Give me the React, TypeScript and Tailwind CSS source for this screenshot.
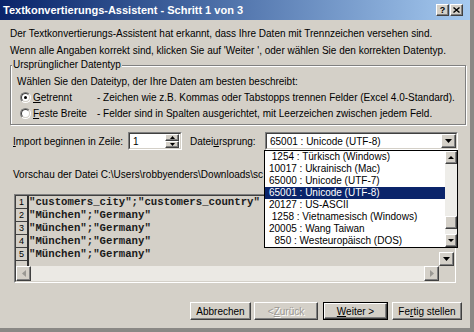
import React from 'react';

const raised =
  'border border-t-white border-l-white border-r-[#404040] border-b-[#404040] shadow-[inset_-1px_-1px_0_#808080] bg-[#d4d0c8]';

function Sunken({ className = '', inner = '', children }: { className?: string; inner?: string; children?: React.ReactNode }) {
  return (
    <div className={`border border-t-[#808080] border-l-[#808080] border-r-white border-b-white ${className}`}>
      <div className={`h-full w-full border border-t-[#404040] border-l-[#404040] border-r-[#d4d0c8] border-b-[#d4d0c8] ${inner}`}>
        {children}
      </div>
    </div>
  );
}

function Arrow({ dir, color = '#000', size = 7 }: { dir: 'up' | 'down' | 'left' | 'right'; color?: string; size?: number }) {
  const h = Math.ceil(size / 2);
  const pts =
    dir === 'down'
      ? `0,0 ${size},0 ${size / 2},${h}`
      : dir === 'up'
      ? `0,${h} ${size},${h} ${size / 2},0`
      : dir === 'left'
      ? `${h},0 ${h},${size} 0,${size / 2}`
      : `0,0 0,${size} ${h},${size / 2}`;
  const w = dir === 'up' || dir === 'down' ? size : h;
  const hh = dir === 'up' || dir === 'down' ? h : size;
  return (
    <svg width={w} height={hh} viewBox={`0 0 ${w} ${hh}`}>
      <polygon points={pts} fill={color} />
    </svg>
  );
}

const codepages = [
  ' 1254 : Türkisch (Windows)',
  '10017 : Ukrainisch (Mac)',
  '65000 : Unicode (UTF-7)',
  '65001 : Unicode (UTF-8)',
  '20127 : US-ASCII',
  ' 1258 : Vietnamesisch (Windows)',
  '20005 : Wang Taiwan',
  '  850 : Westeuropäisch (DOS)',
];

const previewRows = [
  '"customers_city";"customers_country"',
  '"München";"Germany"',
  '"München";"Germany"',
  '"München";"Germany"',
  '"München";"Germany"',
];

function Radio({ checked }: { checked?: boolean }) {
  return (
    <div className="w-[11px] h-[11px] rounded-full border border-t-[#808080] border-l-[#808080] border-r-white border-b-white">
      <div className="w-full h-full rounded-full border border-t-[#404040] border-l-[#404040] border-r-[#d4d0c8] border-b-[#d4d0c8] bg-white flex items-center justify-center">
        {checked && <div className="w-[3px] h-[3px] rounded-full bg-black" />}
      </div>
    </div>
  );
}

function Button({ w, children, isDefault, disabled }: { w: string; children: React.ReactNode; isDefault?: boolean; disabled?: boolean }) {
  const body = (
    <div
      className={`${raised} h-full w-full flex items-center justify-center text-[10px] ${
        disabled ? 'text-[#9a9893] [text-shadow:1px_1px_0_#fff]' : 'text-black'
      }`}
    >
      {children}
    </div>
  );
  if (isDefault) {
    return <div className={`${w} h-[18px] border border-black`}>{body}</div>;
  }
  return <div className={`${w} h-[18px]`}>{body}</div>;
}

export default function App() {
  return (
    <div className="w-[474px] h-[332px] overflow-hidden relative bg-[#d4d0c8] border-r-4 border-b-4 border-[#8a8885] font-['Liberation_Sans',Arial,sans-serif] text-black">
      {/* title bar */}
      <div className="h-[20px] flex items-center bg-linear-to-r from-[#0a246a] to-[#a6caf0]">
        <span className="pl-[3px] text-[11px] font-bold text-white whitespace-nowrap">
          Textkonvertierungs-Assistent - Schritt 1 von 3
        </span>
        <div className="ml-auto mr-[7px] flex gap-[1px]">
          <div className={`${raised} w-[13px] h-[12px] flex items-center justify-center text-[9px] font-bold leading-none`}>?</div>
          <div className={`${raised} w-[13px] h-[12px] flex items-center justify-center`}>
            <svg width="7" height="6" viewBox="0 0 7 6">
              <path d="M0.5 0.5 L6.5 5.5 M6.5 0.5 L0.5 5.5" stroke="#000" strokeWidth="1.4" />
            </svg>
          </div>
        </div>
      </div>

      <div className="pl-[10px] pr-[4px]">
        <div className="mt-[5px] text-[10px] leading-[17px] whitespace-nowrap">
          <div>Der Textkonvertierungs-Assistent hat erkannt, dass Ihre Daten mit Trennzeichen versehen sind.</div>
          <div>Wenn alle Angaben korrekt sind, klicken Sie auf 'Weiter ', oder wählen Sie den korrekten Datentyp.</div>
        </div>

        <fieldset className="border border-[#808080] shadow-[1px_1px_0_#fff,inset_1px_1px_0_#fff]">
          <legend className="ml-[1px] px-[1px] text-[10px] leading-[12px] bg-[#d4d0c8]">Ursprünglicher Datentyp</legend>
          <div className="pl-[6px] pb-[3px] text-[10px] whitespace-nowrap">
            <div className="mt-[4px] leading-[14px]">Wählen Sie den Dateityp, der Ihre Daten am besten beschreibt:</div>
            <div className="h-[16px] flex items-center">
              <div className="ml-[3px]">
                <Radio checked />
              </div>
              <span className="ml-[2px] w-[64px]">
                <u>G</u>etrennt
              </span>
              <span>- Zeichen wie z.B. Kommas oder Tabstopps trennen Felder (Excel 4.0-Standard).</span>
            </div>
            <div className="h-[16px] flex items-center">
              <div className="ml-[3px]">
                <Radio />
              </div>
              <span className="ml-[2px] w-[64px]">
                <u>F</u>este Breite
              </span>
              <span>- Felder sind in Spalten ausgerichtet, mit Leerzeichen zwischen jedem Feld.</span>
            </div>
          </div>
        </fieldset>

        <div className="mt-[7px] h-[18px] flex items-center text-[10px] whitespace-nowrap">
          <span className="ml-[3px] w-[115px]">
            <u>I</u>mport beginnen in Zeile:
          </span>
          <Sunken className="w-[54px] h-[18px]" inner="bg-white flex items-center">
            <span className="pl-[3px]">1</span>
            <div className="ml-auto mr-[1px] flex flex-col">
              <div className={`${raised} w-[14px] h-[7px] flex items-center justify-center`}>
                <Arrow dir="up" size={5} />
              </div>
              <div className={`${raised} w-[14px] h-[7px] flex items-center justify-center`}>
                <Arrow dir="down" size={5} />
              </div>
            </div>
          </Sunken>
          <span className="ml-[8px] w-[75px]">
            Datei<u>u</u>rsprung:
          </span>
          <Sunken className="w-[193px] h-[18px]" inner="bg-white flex items-center">
            <span className="pl-[3px]">65001 : Unicode (UTF-8)</span>
            <div className={`${raised} ml-auto w-[15px] h-[14px] flex items-center justify-center`}>
              <Arrow dir="down" size={7} />
            </div>
          </Sunken>
        </div>

        <div className="mt-[18px] ml-[3px] text-[10px] leading-[14px] whitespace-nowrap">
          Vorschau der Datei C:\Users\robbyenders\Downloads\sc
        </div>

        <Sunken className="mt-[12px] ml-[4px] w-[442px] h-[89px]" inner="grid grid-cols-[1fr_15px] grid-rows-[1fr_15px]">
          <div className="overflow-hidden flex">
            <div className="w-[13px] border-r-2 border-[#303030] flex flex-col">
              {previewRows.map((_, i) => (
                <div key={i} className="h-[13px] border-b border-[#404040] text-[9px] leading-[12px] pl-[3px]">
                  {i + 1}
                </div>
              ))}
            </div>
            <div className="flex flex-col font-['Liberation_Mono',monospace] font-bold text-[10.7px] text-[#1a1a1a] whitespace-pre">
              {previewRows.map((r, i) => (
                <div key={i} className="h-[13px] leading-[13px]">
                  {r}
                </div>
              ))}
            </div>
          </div>
          <div className="flex flex-col">
            <div className={`${raised} h-[14px] flex items-center justify-center`}>
              <Arrow dir="up" size={7} />
            </div>
            <div className="flex-1 bg-[#d4d0c8]" />
            <div className={`${raised} h-[14px] flex items-center justify-center`}>
              <Arrow dir="down" size={7} />
            </div>
          </div>
          <div className="flex bg-[#ebe9e4]">
            <div className={`${raised} w-[15px] flex items-center justify-center`}>
              <Arrow dir="left" size={7} color="#9a9893" />
            </div>
            <div className="flex-1" />
            <div className={`${raised} w-[15px] flex items-center justify-center`}>
              <Arrow dir="right" size={7} color="#9a9893" />
            </div>
          </div>
          <div className="bg-[#d4d0c8]" />
        </Sunken>

        <div className="mt-[19px] mr-[4px] flex justify-end text-[10px]">
          <Button w="w-[61px]">Abbrechen</Button>
          <div className="w-[3px]" />
          <Button w="w-[64px]" disabled>
            &lt; <u>Z</u>urück
          </Button>
          <div className="w-[5px]" />
          <Button w="w-[65px]" isDefault>
            <span>
              <u>W</u>eiter &gt;
            </span>
          </Button>
          <div className="w-[4px]" />
          <Button w="w-[70px]">
            <span>
              Fe<u>r</u>tig stellen
            </span>
          </Button>
        </div>
      </div>

      {/* open dropdown list of the Dateiursprung combo box */}
      <div className="absolute left-[264px] top-[150px] w-[194px] h-[98px] border border-black bg-white flex text-[10px]">
        <div className="flex-1 flex flex-col">
          {codepages.map((c) => (
            <div
              key={c}
              className={`h-[12px] leading-[12px] pl-[4px] whitespace-pre ${
                c.startsWith('65001') ? 'bg-[#0a246a] text-white' : 'text-black'
              }`}
            >
              {c}
            </div>
          ))}
        </div>
        <div className="w-[12px] flex flex-col bg-[#eeede9]">
          <div className={`${raised} h-[13px] flex items-center justify-center`}>
            <Arrow dir="up" size={6} />
          </div>
          <div className="flex-1 flex flex-col">
            <div className="h-[52px]" />
            <div className={`${raised} h-[13px]`} />
          </div>
          <div className={`${raised} h-[13px] flex items-center justify-center`}>
            <Arrow dir="down" size={6} />
          </div>
        </div>
      </div>
    </div>
  );
}
